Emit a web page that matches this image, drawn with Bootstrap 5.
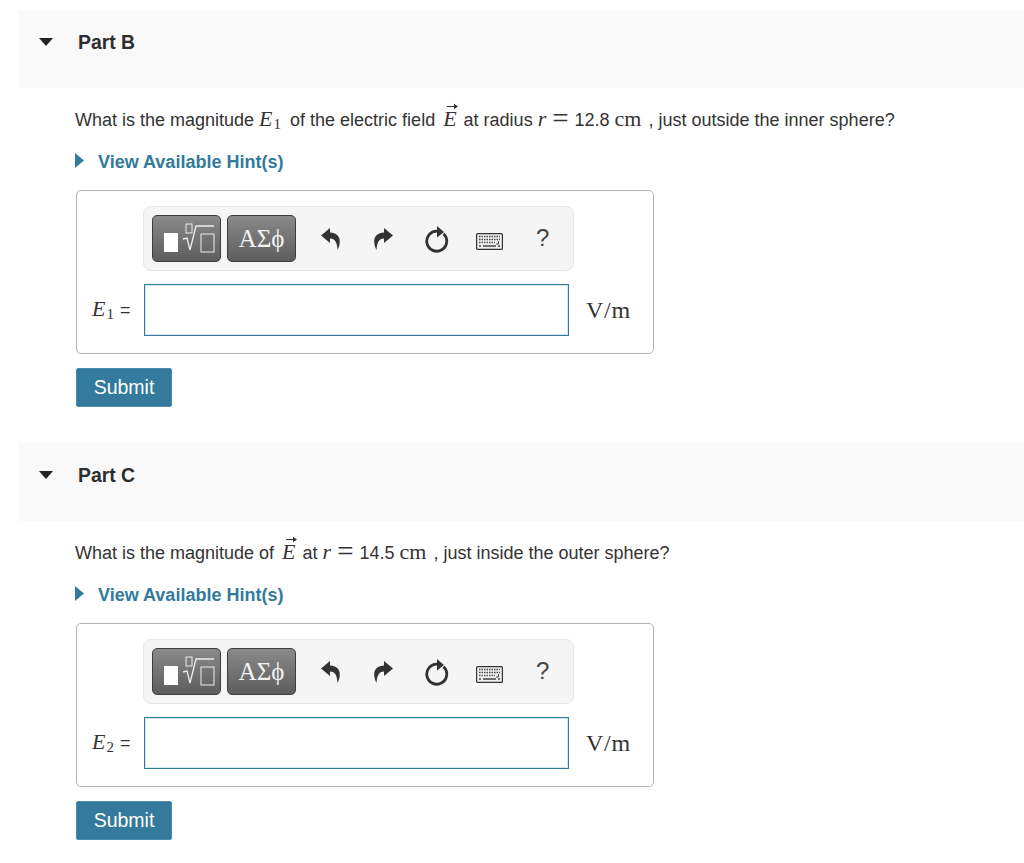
<!DOCTYPE html>
<html lang="en">
<head>
  <meta charset="UTF-8">
  <title>Part B and Part C</title>
  <link href="https://cdn.jsdelivr.net/npm/bootstrap@5.3.3/dist/css/bootstrap.min.css" rel="stylesheet">
  <style>
    body {
      font-family: "Liberation Sans", Arial, sans-serif;
      font-size: 18px;
      color: #333;
      background: #fff;
      margin: 0;
      overflow: hidden;
    }
    .page-wrap { padding: 10px 0 0 19px; }
    .part-block { height: 433px; }
    .part-head {
      height: 78px;
      background: #f9f9f9;
      padding: 20px 0 0 59px;
      position: relative;
      font-size: 19.4px;
      font-weight: 700;
      line-height: 24px;
      color: #2d2d2d;
    }
    .part-caret {
      position: absolute;
      left: 20px;
      top: 28px;
      width: 14px;
      height: 8px;
    }
    .part-body { padding: 19px 0 0 56px; }
    .question-line { line-height: 26px; height: 26px; white-space: nowrap; }
    .math-font { font-family: "Liberation Serif", "Times New Roman", serif; font-size: 22px; line-height: 0; }
    .math-var { font-style: italic; }
    .math-sub { font-size: 15px; position: relative; top: 3px; font-style: normal; line-height: 0; margin: 0 4px 0 1px; }
    .math-eq { font-family: "Liberation Serif", serif; font-size: 29px; line-height: 0; margin: 0 6px 0 6px; position: relative; top: 2px; }
    .math-unit { margin-right: 2px; }
    .vec-wrap { position: relative; display: inline-block; margin: 0 2px 0 3px; }
    .vec-arrow { position: absolute; left: 4px; top: -16px; width: 11px; height: 7px; }
    .hint-link {
      margin-top: 17px;
      height: 24px;
      line-height: 24px;
      font-weight: 700;
      color: #337a9c;
      text-decoration: none;
      gap: 14px;
    }
    .hint-link svg { width: 9px; height: 15px; margin-top: -3px; }
    .answer-box {
      width: 578px;
      height: 164px;
      margin-top: 16px;
      margin-left: 1px;
      border: 1px solid #b3b3b3;
      border-radius: 5px;
      padding: 15px 0 0 66px;
    }
    .tool-bar {
      width: 431px;
      height: 65px;
      background: #f5f5f5;
      border: 1px solid #e6e6e6;
      border-radius: 8px;
      padding: 8px 0 0 8px;
    }
    .tool-key {
      height: 47px;
      border: 1px solid #3d3d3d;
      border-radius: 5px;
      background: linear-gradient(#8a8a8a, #5d5d5d);
      color: #fff;
      padding: 0;
    }
    .key-template { width: 69px; margin-right: 6px; }
    .key-greek {
      width: 69px;
      font-family: "Liberation Serif", serif;
      font-size: 25px;
      line-height: 42px;
      text-align: center;
      color: #f2f2f2;
    }
    .tool-icon { fill: #333; }
    .tool-help { color: #444; font-size: 24px; line-height: 1; }
    .answer-row { margin-top: 13px; margin-left: -51px; }
    .answer-label { width: 52px; white-space: nowrap; font-size: 18px; }
    .answer-label .math-sub { margin-right: 1px; }
    .answer-field {
      width: 425px;
      height: 52px;
      border: 1px solid #337a9c;
      border-radius: 0;
      box-shadow: inset 0 0 0 1px #d8e6ed;
      padding: 0;
    }
    .unit-text {
      font-family: "Liberation Serif", serif;
      font-size: 24px;
      letter-spacing: .7px;
      margin-left: 17px;
      color: #333;
    }
    .submit-btn {
      width: 96px;
      height: 39px;
      margin-top: 14px;
      margin-left: 1px;
      padding: 0;
      display: block;
      background: #337a9c;
      border: 1px solid #4d8dab;
      border-radius: 2px;
      color: #fff;
      font-size: 19.5px;
    }
    .submit-btn:hover { background: #2b6a88; color: #fff; }
  </style>
</head>
<body>
  <svg width="0" height="0" class="position-absolute">
    <symbol id="ico-undo" viewBox="0 0 20 22"><path d="M9 0 L0 7.500 L9 15 V10.500 C13.500 10.500 16 13.500 16.500 22 C21.500 12 18 4.500 9 4.500 Z"/></symbol>
    <symbol id="ico-redo" viewBox="0 0 20 22"><path d="M11 0 L20 7.500 L11 15 V10.500 C6.500 10.500 4 13.500 3.500 22 C-1.500 12 2 4.500 11 4.500 Z"/></symbol>
    <symbol id="ico-reset" viewBox="0 0 24 27">
      <path d="M12 0 L19 6 L12 11.500 Z"/>
      <path d="M12.500 5.200 A10 10 0 1 0 18.500 7.800" fill="none" stroke="#333" stroke-width="2.800"/>
    </symbol>
    <symbol id="ico-keys" viewBox="0 0 27 17">
      <rect x=".6" y=".6" width="25.800" height="15.800" rx="1" fill="#f0f0f0" stroke="#333" stroke-width="1.200"/>
      <path d="M3 3.500h21M3 6.500h21" stroke="#444" stroke-width="1.500" stroke-dasharray="1.500 1"/>
      <path d="M22.500 8v3H20" fill="none" stroke="#444"/>
      <path d="M3 9.500h16" stroke="#555" stroke-width="1.500" stroke-dasharray="1.500 1"/>
      <path d="M3 13h2M7 13h13M22 13h2" stroke="#444" stroke-width="1.400"/>
    </symbol>
  </svg>

  <div class="page-wrap" id="parts"></div>

  <script>
    const arrow = `<svg class="vec-arrow" viewBox="0 0 11 7"><path d="M0 3.500H9" stroke="#333" stroke-width="1"/><path d="M7 .8 L11 3.500 L7 6.200 Z" fill="#333"/></svg>`;
    const vecE = `<span class="vec-wrap math-font math-var">${arrow}E</span>`;
    const mathR = `<span class="math-font math-var">r</span><span class="math-eq">=</span>`;
    const cm = `<span class="math-font math-unit">cm</span>`;

    const parts = [
      {
        title: "Part B",
        question: `What is the magnitude <span class="math-font math-var">E<span class="math-sub">1</span></span> of the electric field ${vecE} at radius ${mathR}12.8 ${cm} , just outside the inner sphere?`,
        sub: "1"
      },
      {
        title: "Part C",
        question: `What is the magnitude of ${vecE} at ${mathR}14.5 ${cm} , just inside the outer sphere?`,
        sub: "2"
      }
    ];

    const box = document.getElementById("parts");

    parts.forEach(part => {
      const block = document.createElement("div");
      block.className = "part-block";
      block.innerHTML = `
        <div class="part-head">
          <svg class="part-caret" viewBox="0 0 14 8"><path d="M0 0H14L7 8Z" fill="#222"/></svg>
          ${part.title}
        </div>
        <div class="part-body">
          <div class="question-line">${part.question}</div>
          <a href="#" class="hint-link d-flex align-items-center">
            <svg viewBox="0 0 9 15"><path d="M0 0L9 7.500L0 15Z" fill="#337a9c"/></svg>
            <span>View Available Hint(s)</span>
          </a>
          <div class="answer-box">
            <div class="tool-bar d-flex">
              <button class="tool-key key-template">
                <svg width="67" height="45" viewBox="0 0 67 45">
                  <rect x="11" y="17" width="14" height="19" fill="#fff"/>
                  <rect x="33" y="8" width="6" height="9" fill="none" stroke="#eee" stroke-width="1"/>
                  <path d="M30 23 L34 22 L37 34 L43 10 H61" fill="none" stroke="#eee" stroke-width="1.300"/>
                  <rect x="48" y="18" width="13" height="18" fill="none" stroke="#eee" stroke-width="1"/>
                </svg>
              </button>
              <button class="tool-key key-greek">ΑΣϕ</button>
              <svg class="tool-icon" width="20" height="22" style="margin:13px 0 0 25px"><use href="#ico-undo"/></svg>
              <svg class="tool-icon" width="20" height="22" style="margin:13px 0 0 32px"><use href="#ico-redo"/></svg>
              <svg class="tool-icon" width="24" height="27" style="margin:11px 0 0 32px"><use href="#ico-reset"/></svg>
              <svg width="27" height="17" style="margin:18px 0 0 27px"><use href="#ico-keys"/></svg>
              <span class="tool-help" style="margin:11px 0 0 33px">?</span>
            </div>
            <div class="answer-row d-flex align-items-center">
              <div class="answer-label"><span class="math-font math-var">E<span class="math-sub">${part.sub}</span></span> =</div>
              <input type="text" class="answer-field form-control" aria-label="Answer">
              <span class="unit-text">V/m</span>
            </div>
          </div>
          <button class="btn submit-btn">Submit</button>
        </div>`;
      box.appendChild(block);
    });
  </script>
  <script src="https://cdn.jsdelivr.net/npm/bootstrap@5.3.3/dist/js/bootstrap.bundle.min.js"></script>
</body>
</html>
